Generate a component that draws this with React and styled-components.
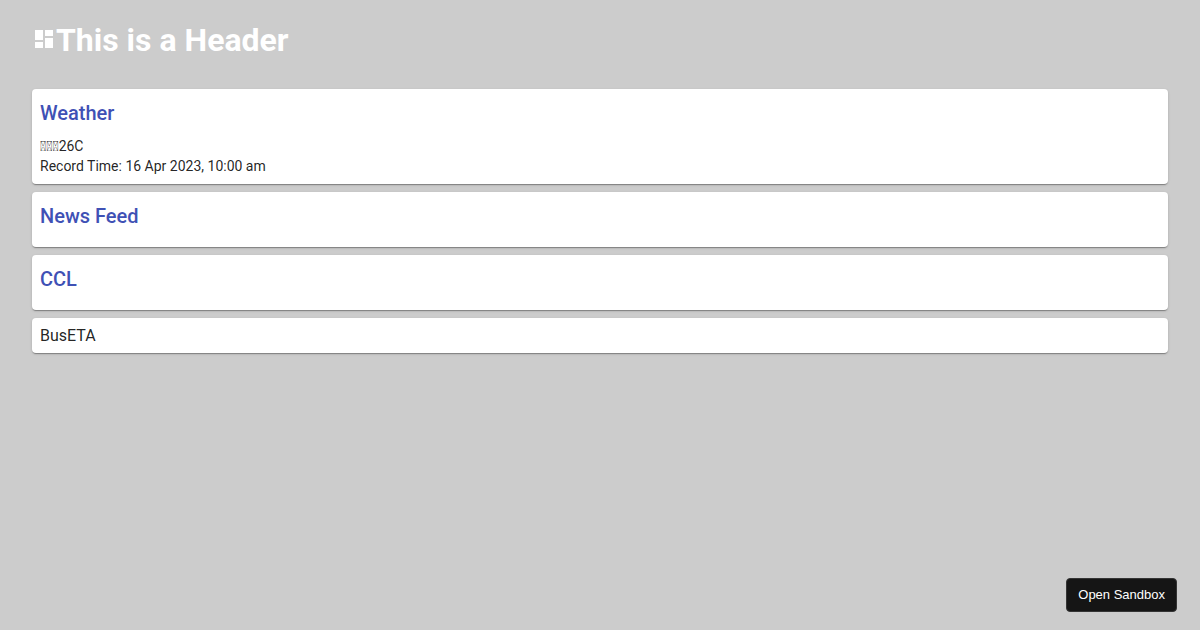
import React from "react";
import styled, { createGlobalStyle } from "styled-components";

const GlobalStyle = createGlobalStyle`
  *, *::before, *::after { box-sizing: border-box; }
  body {
    margin: 0;
    background: #ccc;
    color: rgba(0, 0, 0, 0.87);
    font-family: Roboto, "Liberation Sans", sans-serif;
    font-size: 16px;
  }
`;

const Page = styled.main`
  padding: 20px 32px;
`;

const Header = styled.h1`
  display: flex;
  align-items: baseline;
  margin: 0 0 29px;
  color: #fff;
  font-size: 32px;
  font-weight: 700;
  line-height: 40px;
`;

const HeaderIcon = styled.svg`
  width: 24px;
  height: 24px;
  fill: currentColor;
`;

const CardList = styled.div`
  display: flex;
  flex-direction: column;
  gap: 8px;
`;

const Card = styled.section`
  padding: 8px;
  border-radius: 4px;
  background: #fff;
  line-height: 19px;
  box-shadow:
    0 2px 1px -1px rgba(0, 0, 0, 0.2),
    0 1px 1px 0 rgba(0, 0, 0, 0.14),
    0 1px 3px 0 rgba(0, 0, 0, 0.12);
`;

const CardTitle = styled.h2`
  margin: 0 0 7px;
  color: #3f51b5;
  font-size: 20px;
  font-weight: 500;
  line-height: 32px;
`;

const CardText = styled.p`
  margin: 0;
  font-size: 14px;
  line-height: 20px;
`;

const SandboxButton = styled.button`
  position: fixed;
  right: 23px;
  bottom: 18px;
  height: 34px;
  padding: 0 11px 2px;
  border: 1px solid #343434;
  border-radius: 4px;
  background: #151515;
  color: #fff;
  font-family: "Liberation Sans", Arial, sans-serif;
  font-size: 13px;
  cursor: pointer;
`;

export default function App() {
  return (
    <>
      <GlobalStyle />
      <Page>
        <Header>
          <HeaderIcon viewBox="0 0 24 24" aria-hidden="true">
            <path d="M3 13h8V3H3v10zm0 8h8v-6H3v6zm10 0h8V11h-8v10zm0-18v6h8V3h-8z" />
          </HeaderIcon>
          This is a Header
        </Header>
        <CardList>
          <Card>
            <CardTitle>Weather</CardTitle>
            <CardText>{"\uE000\uE000\uE000"}26C</CardText>
            <CardText>Record Time: 16 Apr 2023, 10:00 am</CardText>
          </Card>
          <Card>
            <CardTitle>News Feed</CardTitle>
          </Card>
          <Card>
            <CardTitle>CCL</CardTitle>
          </Card>
          <Card>BusETA</Card>
        </CardList>
      </Page>
      <SandboxButton type="button">Open Sandbox</SandboxButton>
    </>
  );
}
